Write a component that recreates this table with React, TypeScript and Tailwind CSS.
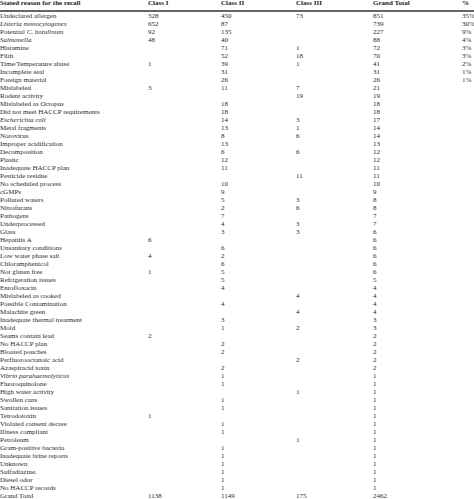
import React from "react";

type Row = {
  reason: React.ReactNode;
  c1?: string;
  c2?: string;
  c3?: string;
  total: string;
  pct?: string;
};

const rows: Row[] = [
  { reason: "Undeclared allergen", c1: "328", c2: "450", c3: "73", total: "851", pct: "35%" },
  { reason: <i>Listeria monocytogenes</i>, c1: "652", c2: "87", total: "739", pct: "30%" },
  { reason: <>Potential <i>C. botulinum</i></>, c1: "92", c2: "135", total: "227", pct: "9%" },
  { reason: <i>Salmonella</i>, c1: "48", c2: "40", total: "88", pct: "4%" },
  { reason: "Histamine", c2: "71", c3: "1", total: "72", pct: "3%" },
  { reason: "Filth", c2: "52", c3: "18", total: "70", pct: "3%" },
  { reason: "Time/Temperature abuse", c1: "1", c2: "39", c3: "1", total: "41", pct: "2%" },
  { reason: "Incomplete seal", c2: "31", total: "31", pct: "1%" },
  { reason: "Foreign material", c2: "26", total: "26", pct: "1%" },
  { reason: "Mislabeled", c1: "3", c2: "11", c3: "7", total: "21" },
  { reason: "Rodent activity", c3: "19", total: "19" },
  { reason: "Mislabeled as Octopus", c2: "18", total: "18" },
  { reason: "Did not meet HACCP requirements", c2: "18", total: "18" },
  { reason: <i>Escherichia coli</i>, c2: "14", c3: "3", total: "17" },
  { reason: "Metal fragments", c2: "13", c3: "1", total: "14" },
  { reason: "Norovirus", c2: "8", c3: "6", total: "14" },
  { reason: "Improper acidification", c2: "13", total: "13" },
  { reason: "Decomposition", c2: "6", c3: "6", total: "12" },
  { reason: "Plastic", c2: "12", total: "12" },
  { reason: "Inadequate HACCP plan", c2: "11", total: "11" },
  { reason: "Pesticide residue", c3: "11", total: "11" },
  { reason: "No scheduled process", c2: "10", total: "10" },
  { reason: "cGMPs", c2: "9", total: "9" },
  { reason: "Polluted waters", c2: "5", c3: "3", total: "8" },
  { reason: "Nitrofurans", c2: "2", c3: "6", total: "8" },
  { reason: "Pathogens", c2: "7", total: "7" },
  { reason: "Underprocessed", c2: "4", c3: "3", total: "7" },
  { reason: "Glass", c2: "3", c3: "3", total: "6" },
  { reason: "Hepatitis A", c1: "6", total: "6" },
  { reason: "Unsanitary conditions", c2: "6", total: "6" },
  { reason: "Low water phase salt", c1: "4", c2: "2", total: "6" },
  { reason: "Chloramphenicol", c2: "6", total: "6" },
  { reason: "Not gluten free", c1: "1", c2: "5", total: "6" },
  { reason: "Refrigeration issues", c2: "5", total: "5" },
  { reason: "Enrofloxacin", c2: "4", total: "4" },
  { reason: "Mislabeled as cooked", c3: "4", total: "4" },
  { reason: "Possible Contamination", c2: "4", total: "4" },
  { reason: "Malachite green", c3: "4", total: "4" },
  { reason: "Inadequate thermal treatment", c2: "3", total: "3" },
  { reason: "Mold", c2: "1", c3: "2", total: "3" },
  { reason: "Seams contain lead", c1: "2", total: "2" },
  { reason: "No HACCP plan", c2: "2", total: "2" },
  { reason: "Bloated pouches", c2: "2", total: "2" },
  { reason: "Perfluorooctanoic acid", c3: "2", total: "2" },
  { reason: "Azaspiracid toxin", c2: "2", total: "2" },
  { reason: <i>Vibrio parahaemolyticus</i>, c2: "1", total: "1" },
  { reason: "Fluoroquinolone", c2: "1", total: "1" },
  { reason: "High water activity", c3: "1", total: "1" },
  { reason: "Swollen cans", c2: "1", total: "1" },
  { reason: "Sanitation issues", c2: "1", total: "1" },
  { reason: "Tetrodotoxin", c1: "1", total: "1" },
  { reason: "Violated consent decree", c2: "1", total: "1" },
  { reason: "Illness compliant", c2: "1", total: "1" },
  { reason: "Petroleum", c3: "1", total: "1" },
  { reason: "Gram-positive bacteria", c2: "1", total: "1" },
  { reason: "Inadequate brine reports", c2: "1", total: "1" },
  { reason: "Unknown", c2: "1", total: "1" },
  { reason: "Sulfadiazine.", c2: "1", total: "1" },
  { reason: "Diesel odor", c2: "1", total: "1" },
  { reason: "No HACCP records", c2: "1", total: "1" },
  { reason: "Grand Total", c1: "1138", c2: "1149", c3: "175", total: "2462" },
];

const grid = "grid grid-cols-[148px_73px_75px_77px_89px_1fr] h-[8px] leading-[8px] whitespace-nowrap";

export default function App() {
  return (
    <div
      className="w-[474px] h-[499px] overflow-hidden bg-white text-[#2b2b2b] text-[7px]"
      style={{ fontFamily: '"Liberation Serif", "Times New Roman", serif' }}
    >
      <div className={`${grid} mt-[-1px] font-bold text-[#1a1a1a]`}>
        <div>Stated reason for the recall</div>
        <div>Class I</div>
        <div>Class II</div>
        <div>Class III</div>
        <div>Grand Total</div>
        <div>%</div>
      </div>
      <div className="mt-[3px] h-[1.5px] bg-[#666]" />
      <div className="mt-[0.5px]">
        {rows.map((r, i) => (
          <div key={i} className={grid}>
            <div>{r.reason}</div>
            <div>{r.c1}</div>
            <div>{r.c2}</div>
            <div>{r.c3}</div>
            <div>{r.total}</div>
            <div>{r.pct}</div>
          </div>
        ))}
      </div>
    </div>
  );
}
